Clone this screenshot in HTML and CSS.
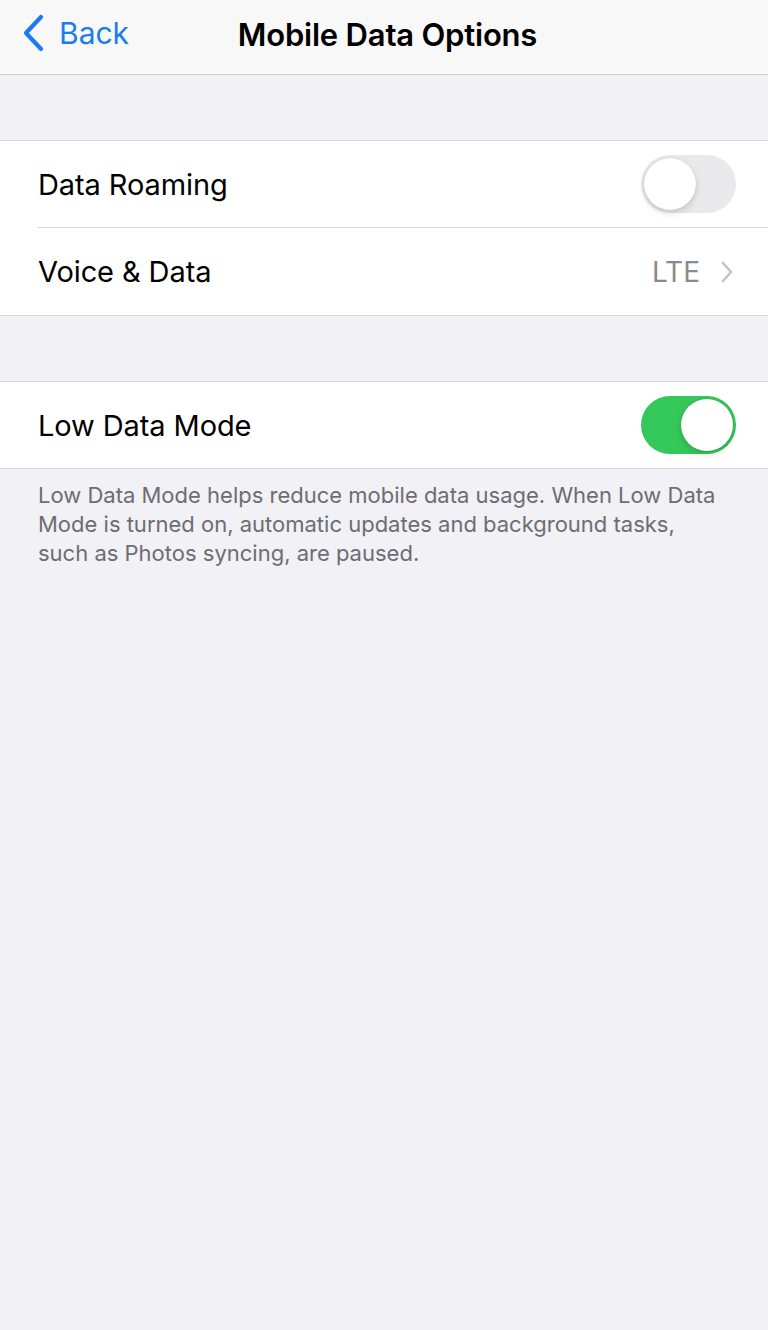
FILE: index.html
```html
<!DOCTYPE html>
<html>
<head>
	<title>Mobile Data Options</title>
	<meta charset="utf-8" />
	<link rel="stylesheet" href="styles.css">
</head>
<body>
	<div class="nav">
		<div class="nav-back">
			<svg class="back-chevron" width="24" height="38" viewBox="0 0 24 38">
				<path d="M19 3 L4 19 L19 35" fill="none" stroke="#1a7cf0" stroke-width="4.2" stroke-linecap="round" stroke-linejoin="round"/>
			</svg>
			<span class="back-text">Back</span>
		</div>
		<h1 class="nav-title">Mobile Data Options</h1>
	</div>

	<div class="group">
		<div class="cell">
			<span class="cell-label">Data Roaming</span>
			<div class="switch"><div class="knob"></div></div>
		</div>
		<div class="cell">
			<span class="cell-label">Voice &amp; Data</span>
			<div class="cell-detail">
				<span class="detail-text">LTE</span>
				<svg class="chevron" width="14" height="24" viewBox="0 0 14 24">
					<path d="M3 3 L11 12 L3 21" fill="none" stroke="#c4c4c7" stroke-width="2.6" stroke-linecap="round" stroke-linejoin="round"/>
				</svg>
			</div>
		</div>
	</div>

	<div class="group">
		<div class="cell">
			<span class="cell-label">Low Data Mode</span>
			<div class="switch on"><div class="knob"></div></div>
		</div>
	</div>
	<p class="footer">Low Data Mode helps reduce mobile data usage. When Low Data Mode is turned on, automatic updates and background tasks, such as Photos syncing, are paused.</p>
</body>
</html>
```

FILE: styles.css
```css
body {
	margin: 0;
	background-color: #f1f1f6;
	font-family: "Inter", "Roboto", "Liberation Sans", sans-serif;
	color: #000;
	min-height: 1330px;
}

.nav {
	position: relative;
	height: 74px;
	background-color: #f8f8f8;
	border-bottom: 1px solid #cfcfd3;
	display: flex;
	align-items: center;
	justify-content: center;
}
.nav-back {
	position: absolute;
	left: 22px;
	top: 14px;
	display: flex;
	align-items: center;
	gap: 13px;
	color: #1a7cf0;
}
.back-text {
	font-size: 30px;
}
.nav-title {
	margin: 0;
	font-size: 31px;
	font-weight: 600;
	letter-spacing: -0.2px;
	padding: 0 0 6px 7px;
}

.group {
	margin-top: 65px;
	background-color: #fff;
	border-top: 1px solid #d6d6da;
	border-bottom: 1px solid #d6d6da;
}
.cell {
	height: 86px;
	margin-left: 38px;
	padding-right: 32px;
	display: flex;
	align-items: center;
	justify-content: space-between;
}
.cell + .cell {
	height: 87px;
	border-top: 1px solid #d6d6da;
}
.cell-label {
	font-size: 29px;
	letter-spacing: -0.1px;
}
.cell-detail {
	display: flex;
	align-items: center;
	gap: 20px;
	margin-right: 2px;
}
.detail-text {
	font-size: 28px;
	color: #8a8a8e;
}

.switch {
	position: relative;
	width: 95px;
	height: 58px;
	border-radius: 29px;
	background-color: #e9e9eb;
}
.switch .knob {
	position: absolute;
	top: 3px;
	left: 3px;
	width: 52px;
	height: 52px;
	border-radius: 50%;
	background-color: #fff;
	box-shadow: 0 3px 6px rgba(0, 0, 0, 0.15), 0 0 1px rgba(0, 0, 0, 0.2);
}
.switch.on {
	background-color: #34c759;
}
.switch.on .knob {
	left: 40px;
}

.footer {
	margin: 12px 38px 0 38px;
	font-size: 22px;
	line-height: 29px;
	color: #6d6d72;
}
```
